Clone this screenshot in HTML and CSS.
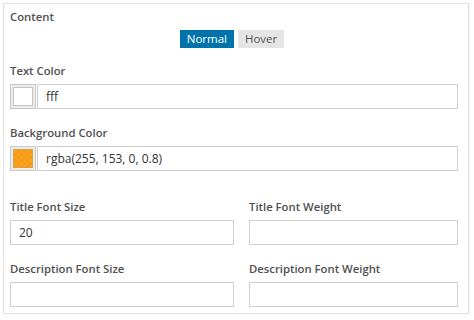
FILE: index.html
```html
<!DOCTYPE html>
<html>
<head>
<meta charset="utf-8">
<link rel="stylesheet" href="styles.css">
</head>
<body>
<div class="panel">
  <div class="label">Content</div>
  <div class="tabs">
    <span class="tab active">Normal</span>
    <span class="tab">Hover</span>
  </div>

  <div class="field first">
    <div class="label">Text Color</div>
    <div class="color-row">
      <span class="swatch"><span class="chip chip-white"></span></span>
      <div class="input">fff</div>
    </div>
  </div>

  <div class="field">
    <div class="label">Background Color</div>
    <div class="color-row">
      <span class="swatch"><span class="chip chip-orange"></span></span>
      <div class="input">rgba(255, 153, 0, 0.8)</div>
    </div>
  </div>

  <div class="grid section">
    <div class="cell">
      <div class="label">Title Font Size</div>
      <div class="input">20</div>
    </div>
    <div class="cell">
      <div class="label">Title Font Weight</div>
      <div class="input"></div>
    </div>
    <div class="cell row2">
      <div class="label">Description Font Size</div>
      <div class="input"></div>
    </div>
    <div class="cell row2">
      <div class="label">Description Font Weight</div>
      <div class="input"></div>
    </div>
  </div>
</div>
</body>
</html>
```

FILE: styles.css
```css
html, body {
  margin: 0;
  padding: 0;
  background: #ffffff;
}
body {
  font-family: "Open Sans", "Noto Sans", sans-serif;
  font-size: 12px;
  color: #444;
}
.panel {
  margin: 3px 0 0 3px;
  width: 448px;
  padding: 5px 10px 6px 6px;
  border: 1px solid #e1e1e1;
  box-shadow: 1px 1px 2px rgba(0, 0, 0, 0.06);
  background: #fff;
}
.label {
  font-size: 11.3px;
  font-weight: 600;
  line-height: 16px;
  color: #505050;
  margin-bottom: 5px;
}
.tabs {
  display: flex;
  justify-content: center;
  gap: 4px;
  padding-right: 4px;
}
.tab {
  display: inline-block;
  height: 18px;
  line-height: 18px;
  padding: 0 7px;
  font-size: 11.5px;
  background: #e5e5e5;
  color: #555;
}
.tab.active {
  background: #0073aa;
  color: #fff;
}
.field {
  margin-top: 16px;
}
.field.first {
  margin-top: 15px;
}
.color-row {
  display: flex;
  gap: 1px;
}
.swatch {
  box-sizing: border-box;
  width: 26px;
  height: 25px;
  border: 1px solid #c8c8c8;
  background: #ececec;
  padding: 2px;
  flex: none;
}
.chip {
  display: block;
  box-sizing: border-box;
  width: 100%;
  height: 100%;
  border: 1px solid #c4c4c4;
}
.chip-white {
  background: #fff;
}
.chip-orange {
  background-color: #ffa21a;
  background-image:
    linear-gradient(45deg, rgba(0,0,0,0.05) 25%, transparent 25%, transparent 75%, rgba(0,0,0,0.05) 75%),
    linear-gradient(45deg, rgba(0,0,0,0.05) 25%, transparent 25%, transparent 75%, rgba(0,0,0,0.05) 75%);
  background-size: 6px 6px;
  background-position: 0 0, 3px 3px;
  border-color: #d9a04a;
}
.input {
  box-sizing: border-box;
  flex: 1;
  height: 25px;
  line-height: 23px;
  border: 1px solid #cfcfcf;
  padding: 0 8px;
  color: #333;
  font-size: 12px;
  background: #fff;
}
.grid {
  display: grid;
  grid-template-columns: 224px 1fr;
  column-gap: 15px;
}
.grid.section {
  margin-top: 28px;
}
.cell.row2 {
  margin-top: 16px;
}
```
